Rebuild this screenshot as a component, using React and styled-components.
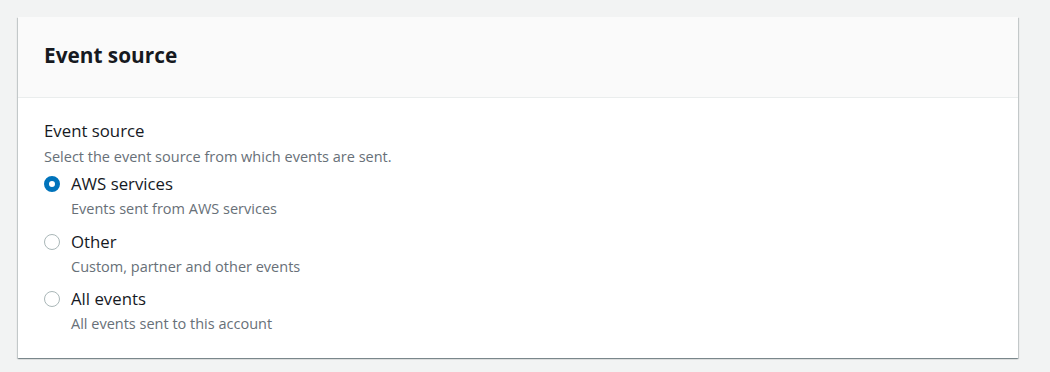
import React from "react";
import styled, { createGlobalStyle } from "styled-components";

const Global = createGlobalStyle`
  html, body { margin: 0; padding: 0; background: #f2f3f3; }
  body { font-family: "Open Sans", "Noto Sans", Arial, sans-serif; color: #16191f; }
`;

const Page = styled.div`
  padding: 17px 32px 14px 18px;
`;

const Card = styled.section`
  background: #ffffff;
  box-shadow: 0 1px 1px 0 rgba(0, 28, 36, 0.3), 1px 1px 1px 0 rgba(0, 28, 36, 0.15),
    -1px 1px 1px 0 rgba(0, 28, 36, 0.15);
`;

const Header = styled.header`
  background: #fafafa;
  border-bottom: 1px solid #eaeded;
  height: 81px;
  box-sizing: border-box;
  display: flex;
  align-items: center;
  padding: 0 26px 4px;
`;

const Title = styled.h2`
  margin: 0;
  font-size: 20.8px;
  font-weight: 700;
  line-height: 26px;
  color: #16191f;
`;

const Body = styled.div`
  padding: 22px 26px 26px;
`;

const FieldLabel = styled.div`
  font-size: 16.8px;
  line-height: 22px;
`;

const FieldDesc = styled.div`
  font-size: 14.5px;
  line-height: 16px;
  color: #687078;
  margin-top: 7px;
`;

const Group = styled.div`
  display: flex;
  flex-direction: column;
  gap: 13.5px;
  margin-top: 8px;
`;

const Option = styled.label`
  display: grid;
  grid-template-columns: 16px 1fr;
  column-gap: 11px;
  row-gap: 6px;
  align-items: center;
  cursor: pointer;
`;

const Dot = styled.span`
  width: 16px;
  height: 16px;
  box-sizing: border-box;
  border-radius: 50%;
  border: ${(p) => (p.$checked ? "5px solid #0073bb" : "1.5px solid #aab7b8")};
  background: #fff;
`;

const OptLabel = styled.span`
  font-size: 16.8px;
  line-height: 22px;
`;

const OptDesc = styled.span`
  grid-column: 2;
  font-size: 14.5px;
  line-height: 16px;
  color: #687078;
`;

const options = [
  { label: "AWS services", desc: "Events sent from AWS services", checked: true },
  { label: "Other", desc: "Custom, partner and other events" },
  { label: "All events", desc: "All events sent to this account" },
];

export default function App() {
  return (
    <>
      <Global />
      <Page>
        <Card>
          <Header>
            <Title>Event source</Title>
          </Header>
          <Body>
            <FieldLabel>Event source</FieldLabel>
            <FieldDesc>Select the event source from which events are sent.</FieldDesc>
            <Group>
              {options.map((o) => (
                <Option key={o.label}>
                  <Dot $checked={o.checked} />
                  <OptLabel>{o.label}</OptLabel>
                  <OptDesc>{o.desc}</OptDesc>
                </Option>
              ))}
            </Group>
          </Body>
        </Card>
      </Page>
    </>
  );
}
